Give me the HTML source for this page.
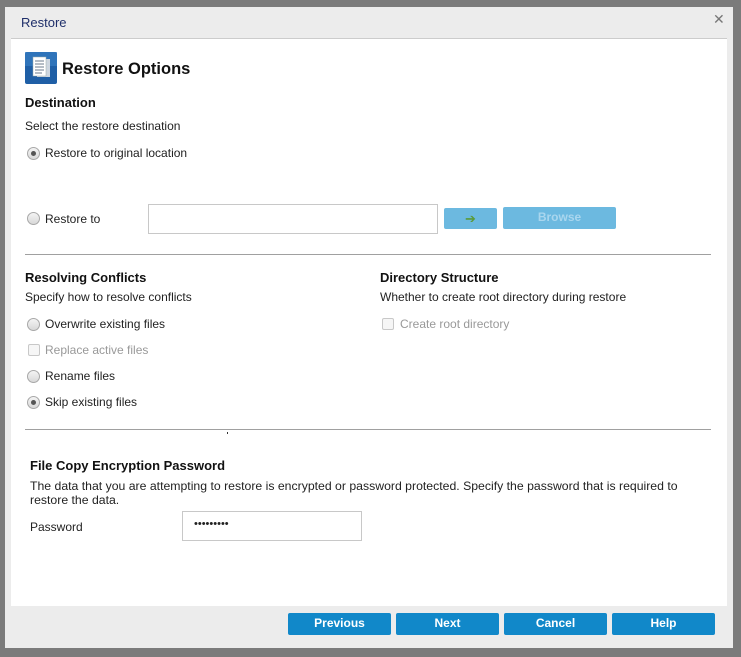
<!DOCTYPE html>
<html><head><style>
body{margin:0;width:741px;height:657px;background:#7b7b7b;position:relative;overflow:hidden;font-family:"Liberation Sans",Arial,sans-serif;font-size:12px;color:#222}
.a{position:absolute;white-space:nowrap}
.dlg{position:absolute;left:5px;top:7px;width:728px;height:641px;background:#ececec}
.white{position:absolute;left:11px;top:38px;width:716px;height:567px;background:#fff;border-top:1px solid #ccc}
.h{font-weight:bold;font-size:13px;color:#111}
.rad{position:absolute;width:11px;height:11px;border-radius:50%;border:1px solid #a8a8a8;background:linear-gradient(#f4f4f4,#d8d8d8)}
.rad.on::after{content:"";position:absolute;left:3px;top:3px;width:5px;height:5px;border-radius:50%;background:#555}
.chk{position:absolute;width:10px;height:10px;border:1px solid #c8c8c8;background:#f6f6f6;border-radius:2px}
.hr{position:absolute;height:1px;background:#a0a0a0}
.btn{position:absolute;top:613px;width:103px;height:22px;background:#1188c9;border-radius:2px;color:#fff;font-weight:bold;font-size:12px;text-align:center;line-height:20px}
.inp{position:absolute;border:1px solid #c8c8c8;background:#fff}
</style></head><body>
<div class="dlg"></div>
<div class="a" style="left:21px;top:15px;font-size:13px;color:#1f2f6a">Restore</div>
<div class="a" style="left:713px;top:11px;font-size:14px;color:#777">✕</div>
<div class="white"></div>
<svg class="a" style="left:25px;top:52px" width="32" height="32" viewBox="0 0 32 32"><rect width="32" height="32" rx="2" fill="#1f5fa6"/><rect x="0" y="0" width="32" height="14" fill="#3b82c8" opacity=".6"/><rect x="12" y="7" width="13" height="18" fill="#cdd6e0"/><rect x="8" y="5" width="13" height="19" fill="#fff" stroke="#9aa" stroke-width=".5"/><path d="M10 9h9M10 12h9M10 15h9M10 18h9M10 21h7" stroke="#6b7b8c" stroke-width="1"/></svg>
<div class="a" style="left:62px;top:60px;font-size:16.5px;font-weight:bold;color:#111">Restore Options</div>
<div class="a h" style="left:25px;top:95px">Destination</div>
<div class="a" style="left:25px;top:119px">Select the restore destination</div>
<div class="rad on" style="left:27px;top:147px"></div>
<div class="a" style="left:45px;top:146px">Restore to original location</div>
<div class="rad" style="left:27px;top:212px"></div>
<div class="a" style="left:45px;top:212px">Restore to</div>
<div class="inp" style="left:148px;top:204px;width:288px;height:28px"></div>
<div class="a" style="left:444px;top:208px;width:53px;height:21px;background:#6cb9e0;border-radius:2px;color:#5a9a3a;text-align:center;line-height:21px;font-size:13px">➔</div>
<div class="a" style="left:503px;top:207px;width:113px;height:22px;background:#6cb9e0;border-radius:2px;color:#a9d6ee;text-align:center;line-height:20px;font-weight:bold">Browse</div>
<div class="hr" style="left:25px;top:254px;width:686px"></div>
<div class="a h" style="left:25px;top:270px">Resolving Conflicts</div>
<div class="a" style="left:25px;top:290px">Specify how to resolve conflicts</div>
<div class="rad" style="left:27px;top:318px"></div>
<div class="a" style="left:45px;top:317px">Overwrite existing files</div>
<div class="chk" style="left:28px;top:344px"></div>
<div class="a" style="left:45px;top:343px;color:#999">Replace active files</div>
<div class="rad" style="left:27px;top:370px"></div>
<div class="a" style="left:45px;top:369px">Rename files</div>
<div class="rad on" style="left:27px;top:396px"></div>
<div class="a" style="left:45px;top:395px">Skip existing files</div>
<div class="a h" style="left:380px;top:270px">Directory Structure</div>
<div class="a" style="left:380px;top:290px">Whether to create root directory during restore</div>
<div class="chk" style="left:382px;top:318px"></div>
<div class="a" style="left:400px;top:317px;color:#999">Create root directory</div>
<div class="hr" style="left:25px;top:429px;width:686px"></div>
<div class="a" style="left:227px;top:432px;width:1px;height:2px;background:#333"></div>
<div class="a h" style="left:30px;top:458px">File Copy Encryption Password</div>
<div class="a" style="left:30px;top:479px;line-height:14px;font-size:12.25px">The data that you are attempting to restore is encrypted or password protected. Specify the password that is required to<br>restore the data.</div>
<div class="a" style="left:30px;top:520px">Password</div>
<div class="inp" style="left:182px;top:511px;width:178px;height:28px"><span style="position:absolute;left:11px;top:6px;font-size:11px">•••••••••</span></div>
<div class="btn" style="left:288px">Previous</div>
<div class="btn" style="left:396px">Next</div>
<div class="btn" style="left:504px">Cancel</div>
<div class="btn" style="left:612px">Help</div>
</body></html>
